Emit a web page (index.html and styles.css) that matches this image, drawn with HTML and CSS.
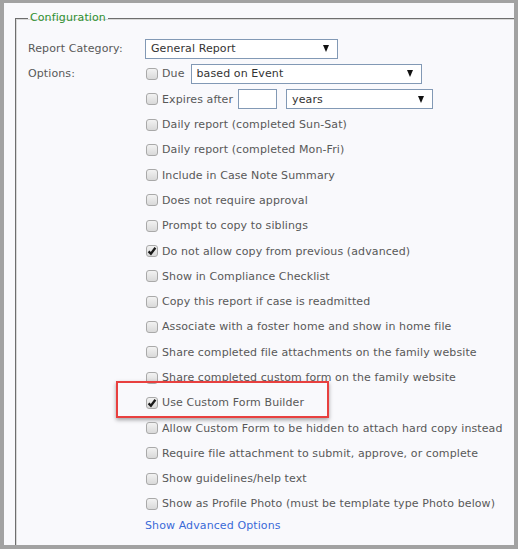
FILE: index.html
```html
<!DOCTYPE html>
<html>
<head>
<meta charset="utf-8">
<link rel="stylesheet" href="styles.css">
</head>
<body>
<div class="frame">
  <fieldset class="config">
    <legend class="legend">Configuration</legend>
    <div class="form">
      <div class="label">Report Category:</div>
      <div class="control">
        <div class="select sel-cat"><span>General Report</span><span class="arrow"></span></div>
      </div>

      <div class="label">Options:</div>
      <div class="options">
        <div class="row">
          <span class="cb"></span><span class="txt">Due</span>
          <div class="select sel-due"><span>based on Event</span><span class="arrow"></span></div>
        </div>
        <div class="row">
          <span class="cb"></span><span class="txt">Expires after</span>
          <div class="textbox"></div>
          <div class="select sel-years"><span>years</span><span class="arrow"></span></div>
        </div>
        <div class="row"><span class="cb"></span><span class="txt">Daily report (completed Sun-Sat)</span></div>
        <div class="row"><span class="cb"></span><span class="txt">Daily report (completed Mon-Fri)</span></div>
        <div class="row"><span class="cb"></span><span class="txt">Include in Case Note Summary</span></div>
        <div class="row"><span class="cb"></span><span class="txt">Does not require approval</span></div>
        <div class="row"><span class="cb"></span><span class="txt">Prompt to copy to siblings</span></div>
        <div class="row"><span class="cb checked"><svg viewBox="0 0 12 12" width="12" height="12"><path d="M2.6 6.4 L4.9 8.8 L9.4 2.8" fill="none" stroke="#1a1a1a" stroke-width="2.3"/></svg></span><span class="txt">Do not allow copy from previous (advanced)</span></div>
        <div class="row"><span class="cb"></span><span class="txt">Show in Compliance Checklist</span></div>
        <div class="row"><span class="cb"></span><span class="txt">Copy this report if case is readmitted</span></div>
        <div class="row"><span class="cb"></span><span class="txt">Associate with a foster home and show in home file</span></div>
        <div class="row"><span class="cb"></span><span class="txt">Share completed file attachments on the family website</span></div>
        <div class="row"><span class="cb"></span><span class="txt">Share completed custom form on the family website</span></div>
        <div class="row highlight-row">
          <span class="highlight"></span>
          <span class="cb checked"><svg viewBox="0 0 12 12" width="12" height="12"><path d="M2.6 6.4 L4.9 8.8 L9.4 2.8" fill="none" stroke="#1a1a1a" stroke-width="2.3"/></svg></span><span class="txt">Use Custom Form Builder</span>
        </div>
        <div class="row"><span class="cb"></span><span class="txt">Allow Custom Form to be hidden to attach hard copy instead</span></div>
        <div class="row"><span class="cb"></span><span class="txt">Require file attachment to submit, approve, or complete</span></div>
        <div class="row"><span class="cb"></span><span class="txt">Show guidelines/help text</span></div>
        <div class="row"><span class="cb"></span><span class="txt">Show as Profile Photo (must be template type Photo below)</span></div>
        <a class="link" href="#">Show Advanced Options</a>
      </div>
    </div>
  </fieldset>
</div>
</body>
</html>
```

FILE: styles.css
```css
html, body {
  margin: 0;
  padding: 0;
}
body {
  background: #a2a2a2;
  font-family: "DejaVu Sans", sans-serif;
  font-size: 11px;
  letter-spacing: 0.1px;
  color: #585858;
}
.frame {
  margin: 3px 4px 4px 4px;
  height: 542px;
  background: #f9f9fc;
  overflow: hidden;
}
.config {
  margin: 8px 0 0 11px;
  width: 600px;
  height: 700px;
  padding: 0 12px;
  border: 1px solid #6e6e6e;
  box-shadow: inset 1px 1px 0 #d8d8d8;
  box-sizing: border-box;
}
.legend {
  padding: 0 2px;
  color: #2f8f2f;
  font-size: 11px;
  line-height: 14px;
}
.form {
  display: grid;
  grid-template-columns: 117px auto;
  margin-top: 11px;
}
.label {
  height: 25.3px;
  line-height: 26px;
}
.control {
  height: 25.3px;
  display: flex;
  align-items: center;
}
.options {
  display: flex;
  flex-direction: column;
}
.row {
  height: 25.3px;
  display: flex;
  align-items: center;
  white-space: nowrap;
}
.cb {
  width: 10px;
  height: 10px;
  margin-left: 1px;
  border: 1px solid #a9a9a9;
  border-radius: 3px;
  background: linear-gradient(#f2f2f2, #d9d9d9);
  position: relative;
  flex: none;
}
.cb svg {
  position: absolute;
  left: -1px;
  top: -1px;
}
.txt {
  margin-left: 4px;
}
.select {
  height: 18px;
  border: 1px solid #8299b5;
  background: #fff;
  display: flex;
  align-items: center;
  justify-content: space-between;
  padding: 0 8px 0 5px;
  box-sizing: content-box;
  color: #333;
}
.arrow {
  width: 0;
  height: 0;
  border-left: 3.5px solid transparent;
  border-right: 3.5px solid transparent;
  border-top: 7px solid #111;
}
.sel-cat { width: 178px; }
.sel-due { width: 216px; margin-left: 6px; }
.sel-years { width: 132px; margin-left: 9px; }
.textbox {
  width: 37px;
  height: 18px;
  border: 1px solid #8299b5;
  background: #fff;
  margin-left: 5px;
}
.highlight-row {
  position: relative;
}
.highlight {
  position: absolute;
  left: -29px;
  top: -9px;
  width: 209px;
  height: 33px;
  border: 2px solid #e8403f;
  box-shadow: 0 2px 4px rgba(0, 0, 0, 0.35);
}
.link {
  color: #3a6ad8;
  text-decoration: none;
  margin-top: 2px;
  line-height: 14px;
}
```
